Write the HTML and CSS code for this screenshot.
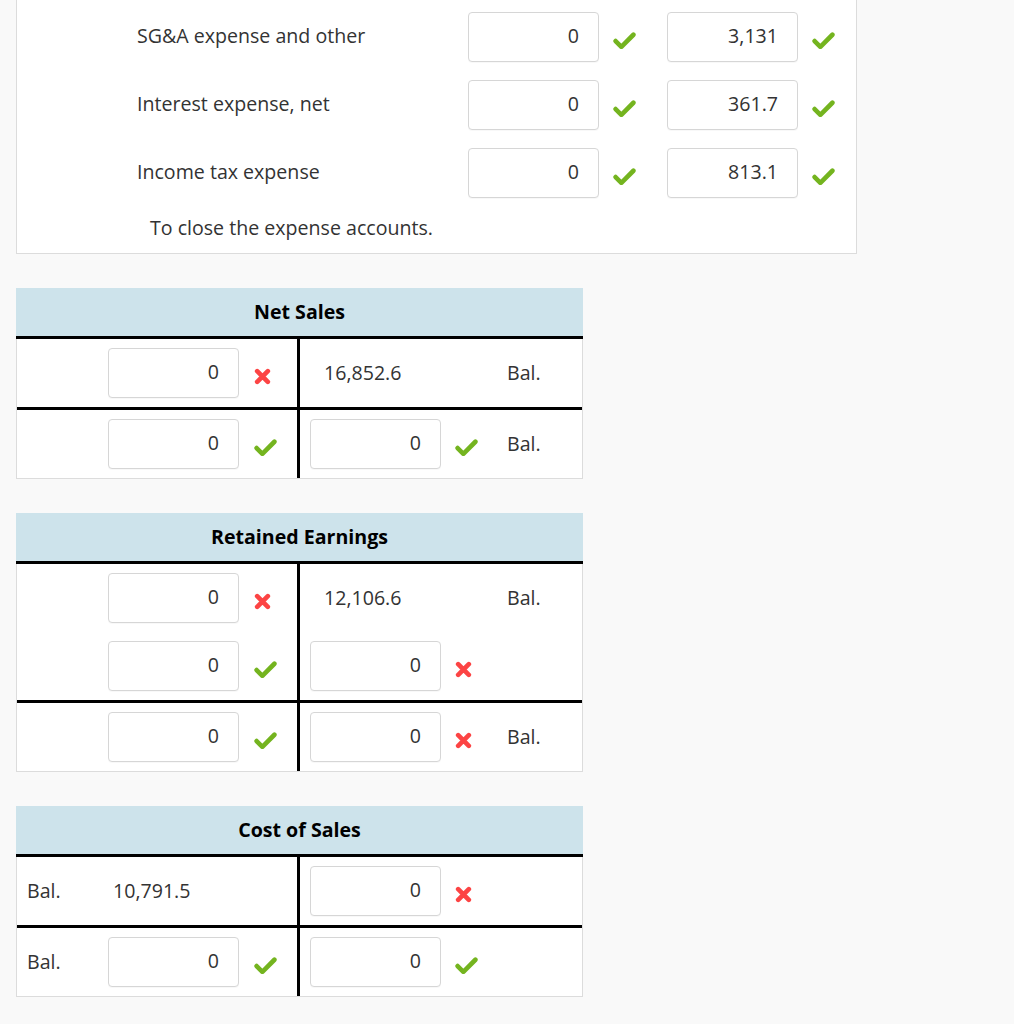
FILE: index.html
```html
<!DOCTYPE html>
<html>
<head>
<meta charset="utf-8">
<link rel="stylesheet" href="styles.css">
</head>
<body>
<div class="page">
  <div class="card">
    <div class="entry">
      <div class="entry-label">SG&amp;A expense and other</div>
      <div class="field">0</div>
      <div class="mark"><svg class="ok" viewBox="0 0 22 16"><path d="M2.5 8.5 L8 14 L19.5 2.5"/></svg></div>
      <div class="field">3,131</div>
      <div class="mark"><svg class="ok" viewBox="0 0 22 16"><path d="M2.5 8.5 L8 14 L19.5 2.5"/></svg></div>
    </div>
    <div class="entry">
      <div class="entry-label">Interest expense, net</div>
      <div class="field">0</div>
      <div class="mark"><svg class="ok" viewBox="0 0 22 16"><path d="M2.5 8.5 L8 14 L19.5 2.5"/></svg></div>
      <div class="field">361.7</div>
      <div class="mark"><svg class="ok" viewBox="0 0 22 16"><path d="M2.5 8.5 L8 14 L19.5 2.5"/></svg></div>
    </div>
    <div class="entry">
      <div class="entry-label">Income tax expense</div>
      <div class="field">0</div>
      <div class="mark"><svg class="ok" viewBox="0 0 22 16"><path d="M2.5 8.5 L8 14 L19.5 2.5"/></svg></div>
      <div class="field">813.1</div>
      <div class="mark"><svg class="ok" viewBox="0 0 22 16"><path d="M2.5 8.5 L8 14 L19.5 2.5"/></svg></div>
    </div>
    <div class="note">To close the expense accounts.</div>
  </div>

  <div class="taccount">
    <div class="thead">Net Sales</div>
    <div class="trow">
      <div class="tcell left">
        <div class="tline">
          <div class="tlabel"></div>
          <div class="field">0</div>
          <div class="lmark"><svg class="bad" viewBox="0 0 16 16"><path d="M3 3 L13 13 M13 3 L3 13"/></svg></div>
        </div>
      </div>
      <div class="tcell right">
        <div class="tline">
          <div class="value rval">16,852.6</div>
          <div class="rmark"></div>
          <div class="tlabel">Bal.</div>
        </div>
      </div>
    </div>
    <div class="trow">
      <div class="tcell left">
        <div class="tline">
          <div class="tlabel"></div>
          <div class="field">0</div>
          <div class="lmark"><svg class="ok" viewBox="0 0 22 16"><path d="M2.5 8.5 L8 14 L19.5 2.5"/></svg></div>
        </div>
      </div>
      <div class="tcell right">
        <div class="tline">
          <div class="field">0</div>
          <div class="rmark"><svg class="ok" viewBox="0 0 22 16"><path d="M2.5 8.5 L8 14 L19.5 2.5"/></svg></div>
          <div class="tlabel">Bal.</div>
        </div>
      </div>
    </div>
  </div>

  <div class="taccount">
    <div class="thead">Retained Earnings</div>
    <div class="trow">
      <div class="tcell left">
        <div class="tline">
          <div class="tlabel"></div>
          <div class="field">0</div>
          <div class="lmark"><svg class="bad" viewBox="0 0 16 16"><path d="M3 3 L13 13 M13 3 L3 13"/></svg></div>
        </div>
        <div class="tline">
          <div class="tlabel"></div>
          <div class="field">0</div>
          <div class="lmark"><svg class="ok" viewBox="0 0 22 16"><path d="M2.5 8.5 L8 14 L19.5 2.5"/></svg></div>
        </div>
      </div>
      <div class="tcell right">
        <div class="tline">
          <div class="value rval">12,106.6</div>
          <div class="rmark"></div>
          <div class="tlabel">Bal.</div>
        </div>
        <div class="tline">
          <div class="field">0</div>
          <div class="rmark"><svg class="bad" viewBox="0 0 16 16"><path d="M3 3 L13 13 M13 3 L3 13"/></svg></div>
          <div class="tlabel"></div>
        </div>
      </div>
    </div>
    <div class="trow">
      <div class="tcell left">
        <div class="tline">
          <div class="tlabel"></div>
          <div class="field">0</div>
          <div class="lmark"><svg class="ok" viewBox="0 0 22 16"><path d="M2.5 8.5 L8 14 L19.5 2.5"/></svg></div>
        </div>
      </div>
      <div class="tcell right">
        <div class="tline">
          <div class="field">0</div>
          <div class="rmark"><svg class="bad" viewBox="0 0 16 16"><path d="M3 3 L13 13 M13 3 L3 13"/></svg></div>
          <div class="tlabel">Bal.</div>
        </div>
      </div>
    </div>
  </div>

  <div class="taccount">
    <div class="thead">Cost of Sales</div>
    <div class="trow">
      <div class="tcell left">
        <div class="tline">
          <div class="tlabel">Bal.</div>
          <div class="value lval">10,791.5</div>
        </div>
      </div>
      <div class="tcell right">
        <div class="tline">
          <div class="field">0</div>
          <div class="rmark"><svg class="bad" viewBox="0 0 16 16"><path d="M3 3 L13 13 M13 3 L3 13"/></svg></div>
        </div>
      </div>
    </div>
    <div class="trow">
      <div class="tcell left">
        <div class="tline">
          <div class="tlabel">Bal.</div>
          <div class="field">0</div>
          <div class="lmark"><svg class="ok" viewBox="0 0 22 16"><path d="M2.5 8.5 L8 14 L19.5 2.5"/></svg></div>
        </div>
      </div>
      <div class="tcell right">
        <div class="tline">
          <div class="field">0</div>
          <div class="rmark"><svg class="ok" viewBox="0 0 22 16"><path d="M2.5 8.5 L8 14 L19.5 2.5"/></svg></div>
        </div>
      </div>
    </div>
  </div>
</div>
</body>
</html>
```

FILE: styles.css
```css
* { box-sizing: border-box; }

body {
  margin: 0;
  background: #f9f9f9;
  font-family: "Open Sans", "DejaVu Sans", sans-serif;
  font-size: 19.6px;
  color: #333;
}

.page {
  padding-left: 16px;
  padding-bottom: 40px;
}

.card {
  width: 841px;
  background: #fff;
  border: 1px solid #dcdcdc;
  border-top: 0;
  padding-top: 12px;
  padding-bottom: 13px;
}

.entry {
  display: flex;
  align-items: center;
  height: 50px;
  margin-bottom: 18px;
}

.entry-label {
  width: 451px;
  flex: none;
  padding-left: 120px;
  padding-bottom: 3px;
}

.field {
  width: 131px;
  height: 50px;
  flex: none;
  border: 1px solid #d6d6d6;
  border-radius: 4px;
  background: #fff;
  text-align: right;
  padding-right: 19px;
  line-height: 46px;
  box-shadow: 0 1px 1px rgba(0,0,0,0.03);
}

.mark {
  width: 68px;
  flex: none;
  padding-left: 14px;
  padding-top: 6px;
}
.mark:last-child {
  width: auto;
  flex: 1;
}

.note {
  margin-top: 1px;
  padding-left: 133px;
  line-height: 24px;
  height: 24px;
}

svg.ok {
  width: 23px;
  height: 17px;
  display: block;
}
svg.ok path {
  fill: none;
  stroke: #74b41f;
  stroke-width: 4.4;
  stroke-linecap: round;
  stroke-linejoin: round;
}
svg.bad {
  width: 17px;
  height: 17px;
  display: block;
}
svg.bad path {
  fill: none;
  stroke: #fc4444;
  stroke-width: 4.4;
  stroke-linecap: round;
}

.taccount {
  width: 567px;
  margin-top: 34px;
  background: #fff;
  border: 1px solid #dcdcdc;
  border-top: 0;
}

.thead {
  height: 51px;
  margin: 0 -1px;
  background: #cde3eb;
  border-bottom: 3px solid #000;
  text-align: center;
  font-weight: bold;
  color: #000;
  line-height: 48px;
}

.trow {
  display: flex;
  border-bottom: 3px solid #000;
}
.trow:last-child {
  border-bottom: 0;
}

.tcell {
  display: flex;
  flex-direction: column;
  gap: 18px;
  padding: 9px 0;
}
.tcell.left {
  width: 283px;
  flex: none;
  border-right: 3px solid #000;
}
.tcell.right {
  flex: 1;
  padding-left: 10px;
}

.tline {
  display: flex;
  align-items: center;
  height: 50px;
}

.tlabel {
  width: 91px;
  flex: none;
  padding-left: 10px;
  padding-bottom: 2px;
}
.tcell.right .tlabel {
  width: auto;
  padding-left: 0;
}

.value {
  width: 131px;
  flex: none;
  padding-bottom: 2px;
}
.lval { padding-left: 5px; }
.rval { padding-left: 14px; }

.lmark {
  width: 58px;
  flex: none;
  padding-left: 15px;
  padding-top: 6px;
}
.rmark {
  width: 66px;
  flex: none;
  padding-left: 14px;
  padding-top: 6px;
}
```
